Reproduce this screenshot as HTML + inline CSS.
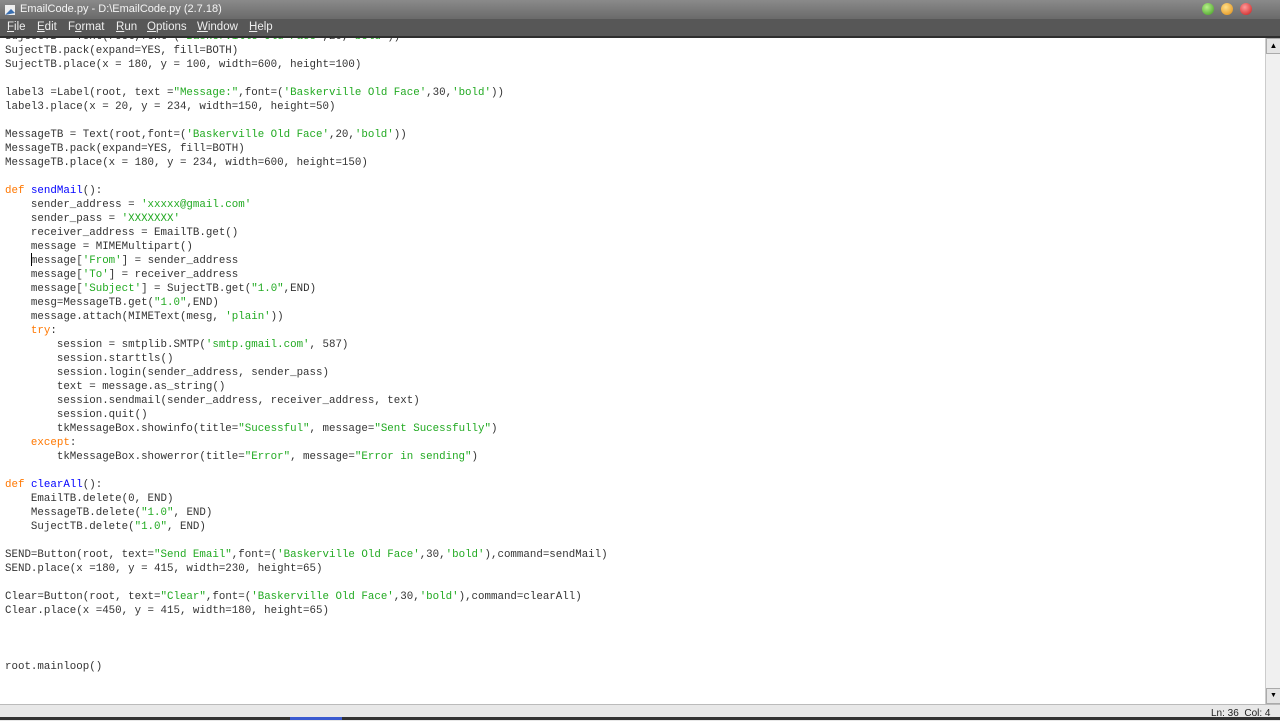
<!DOCTYPE html>
<html><head><meta charset="utf-8"><style>
html,body{margin:0;padding:0;width:1280px;height:720px;overflow:hidden;background:#fff;font-family:"Liberation Sans",sans-serif}
#title{position:absolute;left:0;top:0;width:1280px;height:19px;background:linear-gradient(#8a8a8a,#6a6a6a);color:#f4f4f4;font-size:11px;line-height:19px;z-index:2}
#title span{position:absolute;left:20px}
#menu{position:absolute;left:0;top:19px;width:1280px;height:17px;background:#575757;color:#eee;font-size:11.5px;line-height:17px;border-bottom:2px solid #2e2e2e;z-index:2}
#menu span{position:absolute;top:0}
.dot{position:absolute;top:3px;width:12px;height:12px;border-radius:50%}
#code{position:absolute;left:5px;top:30px;font-family:"Liberation Mono",monospace;font-size:10.8px;line-height:14px;color:#333;white-space:pre;margin:0}
.k{color:#ff7700}.f{color:#0000ff}.s{color:#22aa22}
#sb{position:absolute;left:1265px;top:38px;width:15px;height:666px;background:#f0f0f0;border-left:1px solid #ccc}
#status{position:absolute;left:0;top:704px;width:1280px;height:16px;background:#e8e8e8;border-top:1px solid #bbb;font-size:10px;color:#222}
</style></head><body>
<div id="title"><svg width="14" height="14" style="position:absolute;left:3px;top:3px"><rect x="2" y="2" width="10" height="10" fill="#eee"/><path d="M2 12 L8 6 L12 10 Z" fill="#3a6fb0"/></svg><span>EmailCode.py - D:\EmailCode.py (2.7.18)</span>
<div class="dot" style="left:1202px;background:radial-gradient(circle at 40% 35%,#b8f08a,#3c9a1e)"></div>
<div class="dot" style="left:1221px;background:radial-gradient(circle at 40% 35%,#ffe08a,#e08a10)"></div>
<div class="dot" style="left:1240px;background:radial-gradient(circle at 40% 35%,#ff9a9a,#c81818)"></div></div>
<div id="menu"><span style="left:7px"><u>F</u>ile</span><span style="left:37px"><u>E</u>dit</span><span style="left:68px">F<u>o</u>rmat</span><span style="left:116px"><u>R</u>un</span><span style="left:147px"><u>O</u>ptions</span><span style="left:197px"><u>W</u>indow</span><span style="left:249px"><u>H</u>elp</span></div>
<pre id="code">
SujectTB = Text(root,font=(<span class="s">'Baskerville Old Face'</span>,20,<span class="s">'bold'</span>))
SujectTB.pack(expand=YES, fill=BOTH)
SujectTB.place(x = 180, y = 100, width=600, height=100)

label3 =Label(root, text =<span class="s">"Message:"</span>,font=(<span class="s">'Baskerville Old Face'</span>,30,<span class="s">'bold'</span>))
label3.place(x = 20, y = 234, width=150, height=50)

MessageTB = Text(root,font=(<span class="s">'Baskerville Old Face'</span>,20,<span class="s">'bold'</span>))
MessageTB.pack(expand=YES, fill=BOTH)
MessageTB.place(x = 180, y = 234, width=600, height=150)

<span class="k">def</span> <span class="f">sendMail</span>():
    sender_address = <span class="s">'xxxxx@gmail.com'</span>
    sender_pass = <span class="s">'XXXXXXX'</span>
    receiver_address = EmailTB.get()
    message = MIMEMultipart()
    message[<span class="s">'From'</span>] = sender_address
    message[<span class="s">'To'</span>] = receiver_address
    message[<span class="s">'Subject'</span>] = SujectTB.get(<span class="s">"1.0"</span>,END)
    mesg=MessageTB.get(<span class="s">"1.0"</span>,END)
    message.attach(MIMEText(mesg, <span class="s">'plain'</span>))
    <span class="k">try</span>:
        session = smtplib.SMTP(<span class="s">'smtp.gmail.com'</span>, 587)
        session.starttls()
        session.login(sender_address, sender_pass)
        text = message.as_string()
        session.sendmail(sender_address, receiver_address, text)
        session.quit()
        tkMessageBox.showinfo(title=<span class="s">"Sucessful"</span>, message=<span class="s">"Sent Sucessfully"</span>)
    <span class="k">except</span>:
        tkMessageBox.showerror(title=<span class="s">"Error"</span>, message=<span class="s">"Error in sending"</span>)

<span class="k">def</span> <span class="f">clearAll</span>():
    EmailTB.delete(0, END)
    MessageTB.delete(<span class="s">"1.0"</span>, END)
    SujectTB.delete(<span class="s">"1.0"</span>, END)

SEND=Button(root, text=<span class="s">"Send Email"</span>,font=(<span class="s">'Baskerville Old Face'</span>,30,<span class="s">'bold'</span>),command=sendMail)
SEND.place(x =180, y = 415, width=230, height=65)

Clear=Button(root, text=<span class="s">"Clear"</span>,font=(<span class="s">'Baskerville Old Face'</span>,30,<span class="s">'bold'</span>),command=clearAll)
Clear.place(x =450, y = 415, width=180, height=65)



root.mainloop()
</pre>
<div style="position:absolute;left:0;top:36px;width:1265px;height:2px;background:#2e2e2e;z-index:2"></div>
<div style="position:absolute;left:31px;top:253px;width:1px;height:13px;background:#000"></div>
<div id="sb"><div style="position:absolute;left:0;top:0;width:13px;height:14px;background:#e4e4e4;border:1px solid #aaa;font-size:8px;text-align:center;line-height:14px">▲</div>
<div style="position:absolute;left:0;top:650px;width:13px;height:14px;background:#e4e4e4;border:1px solid #aaa;font-size:7px;text-align:center;line-height:14px">▼</div></div>
<div id="status"><span style="position:absolute;left:1211px;top:3px">Ln: 36&nbsp; Col: 4</span></div>
<div style="position:absolute;left:0;top:717px;width:1280px;height:3px;background:#333"></div>
<div style="position:absolute;left:290px;top:717px;width:52px;height:3px;background:#3a5ad0"></div>
</body></html>
